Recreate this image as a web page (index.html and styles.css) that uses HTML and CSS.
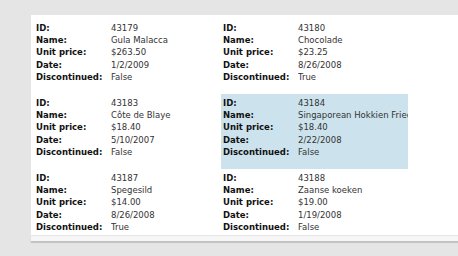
FILE: index.html
```html
<!DOCTYPE html>
<html lang="en">
<head>
    <meta charset="UTF-8">
    <meta name="viewport" content="width=device-width, initial-scale=1.0">
    <title>Products</title>
    <link rel="stylesheet" href="styles.css">
</head>
<body>
    <div class="frame">
        <div class="panel">
            <div class="cards">
                <div class="card">
                    <span class="label">ID:</span><span class="value">43179</span>
                    <span class="label">Name:</span><span class="value">Gula Malacca</span>
                    <span class="label">Unit price:</span><span class="value">$263.50</span>
                    <span class="label">Date:</span><span class="value">1/2/2009</span>
                    <span class="label">Discontinued:</span><span class="value">False</span>
                </div>
                <div class="card">
                    <span class="label">ID:</span><span class="value">43180</span>
                    <span class="label">Name:</span><span class="value">Chocolade</span>
                    <span class="label">Unit price:</span><span class="value">$23.25</span>
                    <span class="label">Date:</span><span class="value">8/26/2008</span>
                    <span class="label">Discontinued:</span><span class="value">True</span>
                </div>
                <div class="card">
                    <span class="label">ID:</span><span class="value">43183</span>
                    <span class="label">Name:</span><span class="value">Côte de Blaye</span>
                    <span class="label">Unit price:</span><span class="value">$18.40</span>
                    <span class="label">Date:</span><span class="value">5/10/2007</span>
                    <span class="label">Discontinued:</span><span class="value">False</span>
                </div>
                <div class="card selected">
                    <span class="label">ID:</span><span class="value">43184</span>
                    <span class="label">Name:</span><span class="value">Singaporean Hokkien Fried Mee</span>
                    <span class="label">Unit price:</span><span class="value">$18.40</span>
                    <span class="label">Date:</span><span class="value">2/22/2008</span>
                    <span class="label">Discontinued:</span><span class="value">False</span>
                </div>
                <div class="card">
                    <span class="label">ID:</span><span class="value">43187</span>
                    <span class="label">Name:</span><span class="value">Spegesild</span>
                    <span class="label">Unit price:</span><span class="value">$14.00</span>
                    <span class="label">Date:</span><span class="value">8/26/2008</span>
                    <span class="label">Discontinued:</span><span class="value">True</span>
                </div>
                <div class="card">
                    <span class="label">ID:</span><span class="value">43188</span>
                    <span class="label">Name:</span><span class="value">Zaanse koeken</span>
                    <span class="label">Unit price:</span><span class="value">$19.00</span>
                    <span class="label">Date:</span><span class="value">1/19/2008</span>
                    <span class="label">Discontinued:</span><span class="value">False</span>
                </div>
            </div>
        </div>
        <div class="panel-foot"></div>
    </div>
</body>
</html>
```

FILE: styles.css
```css
body {
    margin: 0;
    background: #e5e5e5;
    font-family: "DejaVu Sans", Verdana, sans-serif;
    font-size: 8.5px;
    color: #333;
}

.frame {
    margin: 15px 0 0 31px;
}

.panel {
    height: 216px;
    overflow: hidden;
    background: #fff;
    padding: 4px 0 0 3px;
    border-bottom: 1px solid #e4e4e4;
}

.cards {
    display: grid;
    grid-template-columns: repeat(2, 187px);
}

.card {
    display: grid;
    grid-template-columns: 75px 1fr;
    grid-auto-rows: 12.2px;
    align-items: center;
    height: 75px;
    box-sizing: border-box;
    padding: 3px 0 0 2px;
    overflow: hidden;
    white-space: nowrap;
}

.card.selected {
    background: #cce3ed;
}

.label {
    font-weight: bold;
    color: #111;
}

.value {
    overflow: hidden;
}

/* strip under the list */
.panel-foot {
    height: 5px;
    background: #f6f6f6;
    border-bottom: 2px solid #c3c3c3;
    box-shadow: 0 2px 3px rgba(0, 0, 0, 0.08);
}
```
